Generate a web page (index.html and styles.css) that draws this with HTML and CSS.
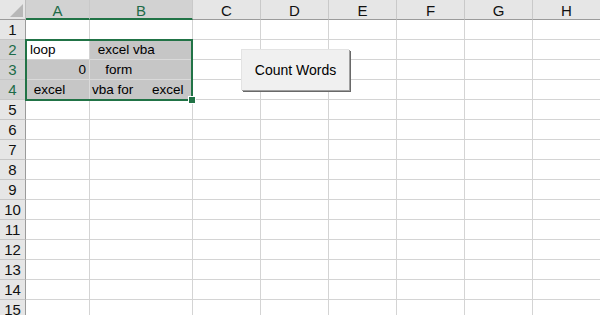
FILE: index.html
```html
<!DOCTYPE html>
<html lang="en">
<head>
  <meta charset="UTF-8">
  <title>Count Words</title>
  <link rel="stylesheet" href="styles.css">
</head>
<body>
  <!-- Worksheet -->
  <div class="sheet">
    <div class="grid">
      <!-- Column headers -->
      <div class="corner"><div class="corner-mark"></div></div>
      <div class="col-head selected">A</div>
      <div class="col-head selected">B</div>
      <div class="col-head">C</div>
      <div class="col-head">D</div>
      <div class="col-head">E</div>
      <div class="col-head">F</div>
      <div class="col-head">G</div>
      <div class="col-head">H</div>

      <!-- Row 1 -->
      <div class="row-head">1</div>
      <div class="cell"></div><div class="cell"></div><div class="cell"></div><div class="cell"></div>
      <div class="cell"></div><div class="cell"></div><div class="cell"></div><div class="cell"></div>

      <!-- Row 2 -->
      <div class="row-head selected">2</div>
      <div class="cell active">loop</div>
      <div class="cell in-range"> excel vba</div>
      <div class="cell"></div><div class="cell"></div><div class="cell"></div>
      <div class="cell"></div><div class="cell"></div><div class="cell"></div>

      <!-- Row 3 -->
      <div class="row-head selected">3</div>
      <div class="cell in-range number">0</div>
      <div class="cell in-range">   form</div>
      <div class="cell"></div><div class="cell"></div><div class="cell"></div>
      <div class="cell"></div><div class="cell"></div><div class="cell"></div>

      <!-- Row 4 -->
      <div class="row-head selected">4</div>
      <div class="cell in-range"> excel</div>
      <div class="cell in-range tight">vba for     excel</div>
      <div class="cell"></div><div class="cell"></div><div class="cell"></div>
      <div class="cell"></div><div class="cell"></div><div class="cell"></div>
    </div>

    <!-- empty rows 5-15 get filled in by the script below -->
    <div class="grid" id="emptyRows"></div>

    <!-- Selection frame around A2:B4 -->
    <div class="selection"><div class="fill-handle"></div></div>

    <!-- Macro button -->
    <button class="macro-btn">Count Words</button>
  </div>

  <script>
    // Add the empty rows below the data
    const emptyRows = document.getElementById('emptyRows');
    for (let r = 5; r <= 15; r++) {
      const head = document.createElement('div');
      head.className = 'row-head';
      head.textContent = r;
      emptyRows.appendChild(head);
      for (let c = 0; c < 8; c++) {
        const cell = document.createElement('div');
        cell.className = 'cell';
        emptyRows.appendChild(cell);
      }
    }
  </script>
</body>
</html>
```

FILE: styles.css
```css
/* Page */
body {
  margin: 0;
  background: #fff;
  overflow: hidden;
  font-family: 'Liberation Sans', Arial, sans-serif;
  color: #000;
}

/* Sheet wrapper */
.sheet {
  position: relative;
  width: 600px;
  height: 315px;
  overflow: hidden;
}

/* Grid of cells */
.grid {
  display: grid;
  grid-template-columns: 26px 64px 103px repeat(6, 68px);
  grid-auto-rows: 20px;
}

/* Top-left corner */
.corner {
  background: #e6e6e6;
  border-right: 1px solid #bdbdbd;
  border-bottom: 1px solid #9b9b9b;
  box-sizing: border-box;
  display: flex;
  justify-content: flex-end;
  align-items: flex-end;
  padding: 0 2px 2px 0;
}

.corner-mark {
  width: 13px;
  height: 13px;
  background: #b8b8b8;
  clip-path: polygon(100% 0, 100% 100%, 0 100%);
}

/* Column headers */
.col-head {
  background: #e6e6e6;
  border-right: 1px solid #c9c9c9;
  border-bottom: 1px solid #9b9b9b;
  box-sizing: border-box;
  display: flex;
  justify-content: center;
  align-items: center;
  font-size: 15px;
  color: #111;
  padding-top: 1px;
}

.col-head.selected {
  background: #d2d2d2;
  color: #1e6b48;
  border-bottom: 2px solid #217346;
  padding-top: 2px;
}

/* Row headers */
.row-head {
  background: #e6e6e6;
  border-right: 1px solid #9b9b9b;
  border-bottom: 1px solid #c6c6c6;
  box-sizing: border-box;
  display: flex;
  justify-content: center;
  align-items: center;
  font-size: 15px;
  color: #111;
}

.row-head.selected {
  background: #d2d2d2;
  color: #1e6b48;
}

/* Cells */
.cell {
  border-right: 1px solid #d4d4d4;
  border-bottom: 1px solid #d4d4d4;
  box-sizing: border-box;
  font-size: 13.5px;
  line-height: 20px;
  padding: 0 3px 0 4px;
  white-space: pre;
  overflow: hidden;
}

.cell.in-range {
  background: #c6c6c6;
  border-color: #dadada;
}

.cell.active {
  background: #fff;
}

.cell.number {
  text-align: right;
}

.cell.tight {
  padding-left: 2px;
}

/* Selection frame */
.selection {
  position: absolute;
  left: 25px;
  top: 39px;
  width: 168px;
  height: 62px;
  border: 2px solid #217346;
  box-sizing: border-box;
  pointer-events: none;
}

.fill-handle {
  position: absolute;
  right: -5px;
  bottom: -5px;
  width: 6px;
  height: 6px;
  background: #217346;
  border: 1px solid #fff;
}

/* Macro button */
.macro-btn {
  position: absolute;
  left: 241px;
  top: 49px;
  width: 108px;
  height: 41px;
  background: #f0f0f0;
  border: none;
  border-top: 1px solid #e3e3e3;
  border-left: 1px solid #e3e3e3;
  box-shadow: 1px 1px 0 #a0a0a0, 2px 2px 0 #696969;
  font-family: 'Liberation Sans', Arial, sans-serif;
  font-size: 14px;
  color: #000;
  padding: 0;
}
```
